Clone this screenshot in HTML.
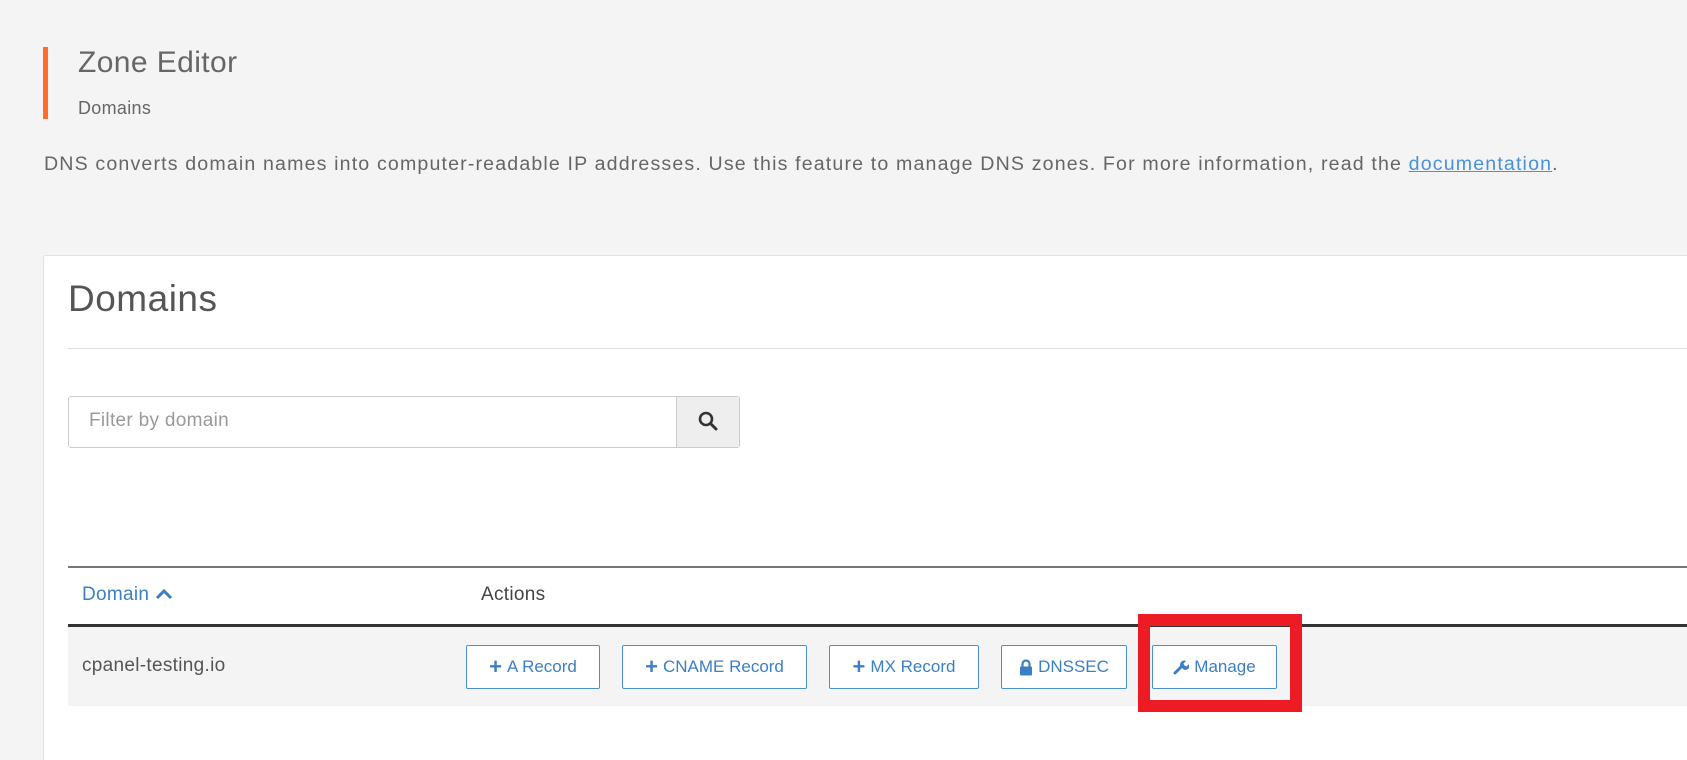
<!DOCTYPE html>
<html style="width:1687px;height:760px;overflow:hidden"><head><style>
*{box-sizing:border-box;margin:0;padding:0}
body{width:1687px;height:760px;background:#f4f4f4;font-family:"Liberation Sans",sans-serif;color:#555;position:relative;overflow:hidden}
.a{position:absolute;white-space:nowrap}
.btn{position:absolute;top:645px;height:44px;border:1px solid #4a8fd4;border-radius:2px;background:#fff;color:#3b7fc4;font-size:17px;display:flex;align-items:center;justify-content:center;gap:5px}
</style></head><body>
<div class="a" style="left:43px;top:47px;width:5px;height:72px;background:#ff6c2c"></div>
<div class="a" style="left:78px;top:46px;font-size:30px;color:#666;letter-spacing:0.4px">Zone Editor</div>
<div class="a" style="left:78px;top:98px;font-size:18px;color:#666;letter-spacing:0.3px">Domains</div>
<div class="a" style="left:44px;top:153px;font-size:19.6px;color:#666;letter-spacing:1.15px">DNS converts domain names into computer-readable IP addresses. Use this feature to manage DNS zones. For more information, read the <span style="color:#4a90d9;text-decoration:underline">documentation</span>.</div>
<div class="a" style="left:43px;top:255px;width:1660px;height:505px;background:#fff;border:1px solid #e2e2e2;border-bottom:none;border-radius:3px 3px 0 0"></div>
<div class="a" style="left:68px;top:278px;font-size:37px;color:#555;letter-spacing:0.5px">Domains</div>
<div class="a" style="left:68px;top:348px;width:1630px;height:1px;background:#ddd"></div>
<div class="a" style="left:68px;top:396px;width:672px;height:52px;border:1px solid #ccc;border-radius:3px;background:#fff"></div>
<div class="a" style="left:676px;top:397px;width:63px;height:50px;background:#eee;border-left:1px solid #ccc"></div>
<svg class="a" style="left:697px;top:410px" width="22" height="22" viewBox="0 0 22 22"><circle cx="9" cy="9" r="6" fill="none" stroke="#333" stroke-width="2.6"/><path d="M13.5 13.5L19 19" stroke="#333" stroke-width="3" stroke-linecap="round"/></svg>
<div class="a" style="left:89px;top:410px;font-size:19px;color:#999;letter-spacing:0.3px">Filter by domain</div>
<div class="a" style="left:68px;top:566px;width:1630px;height:2px;background:#777"></div>
<div class="a" style="left:82px;top:584px;font-size:19px;color:#3b7fc4;letter-spacing:0.3px">Domain <svg width="18" height="12" viewBox="0 0 18 12"><path d="M2 10L9 3L16 10" fill="none" stroke="#3b7fc4" stroke-width="3"/></svg></div>
<div class="a" style="left:481px;top:584px;font-size:19px;color:#444;letter-spacing:0.3px">Actions</div>
<div class="a" style="left:68px;top:624px;width:1630px;height:3px;background:#333"></div>
<div class="a" style="left:68px;top:627px;width:1630px;height:79px;background:#f4f4f4"></div>
<div class="a" style="left:82px;top:655px;font-size:19px;color:#555;letter-spacing:0.3px">cpanel-testing.io</div>
<div class="btn" style="left:466px;width:134px"><b style="font-size:22px">+</b>A Record</div>
<div class="btn" style="left:622px;width:185px"><b style="font-size:22px">+</b>CNAME Record</div>
<div class="btn" style="left:829px;width:150px"><b style="font-size:22px">+</b>MX Record</div>
<div class="btn" style="left:1001px;width:126px"><svg width="14" height="17" viewBox="0 0 14 17"><path d="M3.5 8V5a3.5 3.5 0 0 1 7 0v3" fill="none" stroke="#3b7fc4" stroke-width="2.2"/><rect x="1" y="7.5" width="12" height="9" rx="1" fill="#3b7fc4"/></svg>DNSSEC</div>
<div class="btn" style="left:1152px;width:125px"><svg width="16" height="16" viewBox="0 0 16 16"><path d="M2 14L9 7" stroke="#3b7fc4" stroke-width="3" stroke-linecap="round"/><path d="M8 8a4 4 0 0 1 5-6l-2.5 2.5 1 2 2 1L16 5a4 4 0 0 1-6 5z" fill="#3b7fc4"/></svg>Manage</div>
<div class="a" style="left:1138px;top:614px;width:164px;height:98px;border:12px solid #ed1c24"></div>
</body></html>
